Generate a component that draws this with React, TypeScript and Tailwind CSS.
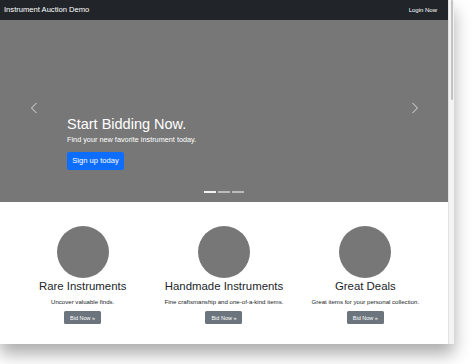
import React from "react";

const features = [
  { title: "Rare Instruments", text: "Uncover valuable finds." },
  { title: "Handmade Instruments", text: "Fine craftsmanship and one-of-a-kind items." },
  { title: "Great Deals", text: "Great items for your personal collection." },
];

const Chevron: React.FC<{ dir: "left" | "right" }> = ({ dir }) => (
  <svg width="8" height="12" viewBox="0 0 8 12" fill="none">
    <path
      d={dir === "left" ? "M6.5 1 L1.5 6 L6.5 11" : "M1.5 1 L6.5 6 L1.5 11"}
      stroke="#e0e0e0"
      strokeWidth="1"
    />
  </svg>
);

const App: React.FC = () => {
  return (
    <div className="w-[474px] h-[364px] bg-white overflow-hidden font-['Liberation_Sans',Arial,sans-serif]">
      <div className="w-[454px] h-[344px] flex bg-white shadow-[0_10px_16px_rgba(0,0,0,0.33)]">
        <div className="w-[448px] flex flex-col">
          {/* navbar */}
          <div className="h-[20px] bg-[#212529] flex items-center justify-between pl-[4px] pr-[11px]">
            <span className="text-white text-[7.6px]">Instrument Auction Demo</span>
            <span className="text-white text-[6px]">Login Now</span>
          </div>

          {/* carousel */}
          <div className="h-[182px] bg-[#777777] flex items-center">
            <div className="w-[67px] flex justify-center pb-[6px]">
              <Chevron dir="left" />
            </div>
            <div className="flex-1 flex flex-col pt-[63px]">
              <h1 className="text-white text-[14.5px] leading-[18px]">Start Bidding Now.</h1>
              <p className="text-white text-[7.3px] mt-[2px]">Find your new favorite instrument today.</p>
              <button className="mt-[6px] w-[57px] h-[18px] bg-[#0d6efd] rounded-[2px] text-white text-[7.6px]">
                Sign up today
              </button>
            </div>
            <div className="w-[67px] flex justify-center pb-[6px]">
              <Chevron dir="right" />
            </div>
          </div>
          <div className="relative">
            <div className="absolute left-[204px] top-[-11px] flex gap-[2px]">
              <span className="w-[12px] h-[2px] bg-white/90" />
              <span className="w-[12px] h-[2px] bg-white/50" />
              <span className="w-[12px] h-[2px] bg-white/50" />
            </div>
          </div>

          {/* features */}
          <div className="flex-1 grid grid-cols-3 px-[12px] pt-[24px]">
            {features.map(f => (
              <div key={f.title} className="flex flex-col items-center text-[#212529]">
                <div className="w-[52px] h-[52px] rounded-full bg-[#777777]" />
                <h2 className="text-[11.4px] leading-[14px] mt-[1px]">{f.title}</h2>
                <p className="text-[6.1px] mt-[4px]">{f.text}</p>
                <button className="mt-[5px] w-[37px] h-[13px] bg-[#6c757d] rounded-[1.5px] text-white text-[5.5px]">
                  Bid Now »
                </button>
              </div>
            ))}
          </div>
        </div>

        {/* scrollbar */}
        <div className="w-[6px] bg-[#f4f4f4] border-l border-[#e2e2e2] flex justify-center">
          <div className="w-[2px] h-[100px] bg-[#c2c2c2] rounded-full" />
        </div>
      </div>
    </div>
  );
};

export default App;
